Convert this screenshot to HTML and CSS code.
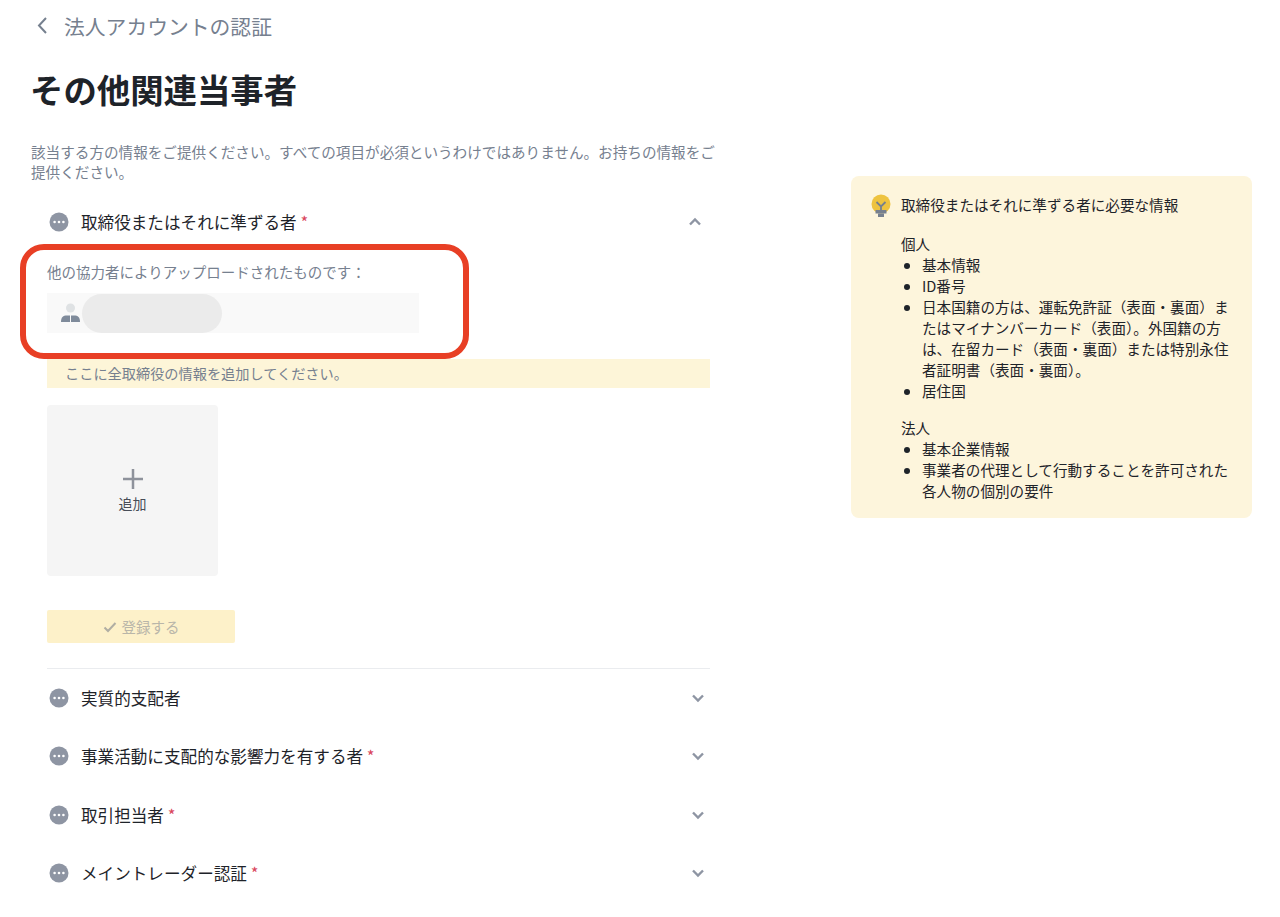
FILE: index.html
```html
<!DOCTYPE html>
<html lang="ja">
<head>
<meta charset="utf-8">
<title>その他関連当事者</title>
<link rel="stylesheet" href="styles.css">
</head>
<body>
<div class="page">
  <main class="main">
    <div class="back">
      <svg class="back-icon" width="14" height="20" viewBox="0 0 14 20"><path d="M12 2 L5 9.500 L12 17" fill="none" stroke="#76808f" stroke-width="2"/></svg>
      <span>法人アカウントの認証</span>
    </div>
    <h1 class="title">その他関連当事者</h1>
    <p class="desc">該当する方の情報をご提供ください。すべての項目が必須というわけではありません。お持ちの情報をご提供ください。</p>
    <section class="open-section">
      <div class="acc-row first">
        <svg class="dots" width="20" height="20" viewBox="0 0 20 20"><circle cx="10" cy="10" r="9.5" fill="#8e95a3"/><circle cx="5.6" cy="10" r="1.3" fill="#fff"/><circle cx="10" cy="10" r="1.3" fill="#fff"/><circle cx="14.4" cy="10" r="1.3" fill="#fff"/></svg>
        <span class="acc-label">取締役またはそれに準ずる者<span class="req"> *</span></span>
        <svg class="chev" width="14" height="10" viewBox="0 0 14 10"><path d="M2 7.5 L7 2.5 L12 7.5" fill="none" stroke="#8e95a3" stroke-width="2.4"/></svg>
      </div>
      <div class="uploaded-label">他の協力者によりアップロードされたものです：</div>
      <div class="uploaded-row">
        <svg class="person" width="22" height="24" viewBox="0 0 22 24"><circle cx="10.5" cy="6" r="4.5" fill="#dfe2e4"/><path d="M1 20 C1 15 3 13.500 7 13.500 L10 13.500 L10 20 Z M11 13.500 L14 13.500 C18 13.500 20 15 20 20 L11 20 Z" fill="#7f8b9b"/></svg>
        <div class="redacted"></div>
      </div>
      <div class="notice">ここに全取締役の情報を追加してください。</div>
      <div class="add-card">
        <svg width="20" height="20" viewBox="0 0 20 20"><path d="M10 0 V20 M0 10 H20" stroke="#8e929b" stroke-width="2.500"/></svg>
        <span class="add-text">追加</span>
      </div>
      <div class="submit">
        <svg width="14" height="12" viewBox="0 0 14 12"><path d="M1.500 6.500 L5 10 L12.500 2" fill="none" stroke="#b0aea3" stroke-width="2"/></svg>
        <span>登録する</span>
      </div>
      <div class="annotation"></div>
    </section>
    <div class="acc-row">
      <svg class="dots" width="20" height="20" viewBox="0 0 20 20"><circle cx="10" cy="10" r="9.5" fill="#8e95a3"/><circle cx="5.6" cy="10" r="1.3" fill="#fff"/><circle cx="10" cy="10" r="1.3" fill="#fff"/><circle cx="14.4" cy="10" r="1.3" fill="#fff"/></svg>
      <span class="acc-label">実質的支配者</span>
      <svg class="chev" width="14" height="10" viewBox="0 0 14 10"><path d="M2 2.500 L7 7.500 L12 2.500" fill="none" stroke="#8e95a3" stroke-width="2.400"/></svg>
    </div>
    <div class="acc-row">
      <svg class="dots" width="20" height="20" viewBox="0 0 20 20"><circle cx="10" cy="10" r="9.500" fill="#8e95a3"/><circle cx="5.6" cy="10" r="1.3" fill="#fff"/><circle cx="10" cy="10" r="1.3" fill="#fff"/><circle cx="14.4" cy="10" r="1.3" fill="#fff"/></svg>
      <span class="acc-label">事業活動に支配的な影響力を有する者<span class="req"> *</span></span>
      <svg class="chev" width="14" height="10" viewBox="0 0 14 10"><path d="M2 2.500 L7 7.500 L12 2.500" fill="none" stroke="#8e95a3" stroke-width="2.400"/></svg>
    </div>
    <div class="acc-row">
      <svg class="dots" width="20" height="20" viewBox="0 0 20 20"><circle cx="10" cy="10" r="9.500" fill="#8e95a3"/><circle cx="5.6" cy="10" r="1.3" fill="#fff"/><circle cx="10" cy="10" r="1.3" fill="#fff"/><circle cx="14.4" cy="10" r="1.3" fill="#fff"/></svg>
      <span class="acc-label">取引担当者<span class="req"> *</span></span>
      <svg class="chev" width="14" height="10" viewBox="0 0 14 10"><path d="M2 2.500 L7 7.500 L12 2.500" fill="none" stroke="#8e95a3" stroke-width="2.400"/></svg>
    </div>
    <div class="acc-row">
      <svg class="dots" width="20" height="20" viewBox="0 0 20 20"><circle cx="10" cy="10" r="9.500" fill="#8e95a3"/><circle cx="5.6" cy="10" r="1.3" fill="#fff"/><circle cx="10" cy="10" r="1.3" fill="#fff"/><circle cx="14.4" cy="10" r="1.3" fill="#fff"/></svg>
      <span class="acc-label">メイントレーダー認証<span class="req"> *</span></span>
      <svg class="chev" width="14" height="10" viewBox="0 0 14 10"><path d="M2 2.500 L7 7.500 L12 2.500" fill="none" stroke="#8e95a3" stroke-width="2.400"/></svg>
    </div>
  </main>
  <aside class="tip">
    <svg class="bulb" width="20" height="26" viewBox="0 0 20 26"><circle cx="10" cy="10" r="9.500" fill="#eec33f"/><path d="M5.500 8 L10 12.500 L14.500 8 M10 12.500 V17" fill="none" stroke="#76808f" stroke-width="1.800"/><rect x="4.500" y="16" width="11" height="3.500" fill="#76808f"/><rect x="7" y="19.500" width="6" height="3.500" fill="#76808f"/></svg>
    <div class="tip-body">
      <div class="tip-head">取締役またはそれに準ずる者に必要な情報</div>
      <div class="tip-sub">個人</div>
      <ul class="tip-list">
        <li>基本情報</li>
        <li>ID番号</li>
        <li>日本国籍の方は、運転免許証（表面・裏面）またはマイナンバーカード（表面）。外国籍の方は、在留カード（表面・裏面）または特別永住者証明書（表面・裏面）。</li>
        <li>居住国</li>
      </ul>
      <div class="tip-sub second">法人</div>
      <ul class="tip-list">
        <li>基本企業情報</li>
        <li>事業者の代理として行動することを許可された各人物の個別の要件</li>
      </ul>
    </div>
  </aside>
</div>
</body>
</html>
```
FILE: styles.css
```css
* { box-sizing: border-box; }
html, body { margin: 0; padding: 0; background: #fff; }
body {
  font-family: "Noto Sans CJK JP", "Noto Sans", sans-serif;
  color: #1e2329;
  height: 917px;
  overflow: hidden;
}
.page {
  display: flex;
  align-items: flex-start;
  padding-left: 30px;
}
.main { width: 681px; flex: none; }
.back {
  display: flex;
  align-items: center;
  height: 28px;
  margin-top: 12px;
  margin-left: 4px;
  gap: 16px;
  font-size: 20.8px;
  line-height: 28px;
  color: #76808f;
}
.title {
  margin: 25px 0 0;
  font-size: 33.4px;
  line-height: 48px;
  font-weight: 700;
  color: #1e2329;
}
.desc {
  margin: 29px 0 0 1px;
  width: 690px;
  font-size: 14.6px;
  line-height: 20px;
  color: #76808f;
}
.open-section { position: relative; margin-left: 17px; width: 663px; border-bottom: 1px solid #eaecef; padding-bottom: 25px; }
.acc-row {
  display: flex;
  align-items: center;
  height: 58.33px;
  margin-left: 19px;
  width: 656px;
  font-size: 16.6px;
  color: #1e2329;
}
.open-section .acc-row { margin-left: 2px; width: 653px; height: 38px; }
.acc-row.first { margin-top: 21px; }
.dots { flex: none; margin-right: 12px; }
.acc-label { flex: 1; line-height: 24px; }
.req { color: #d9455c; }
.chev { flex: none; }
.uploaded-label { margin-top: 21px; font-size: 14.5px; line-height: 20px; color: #76808f; }
.uploaded-row {
  display: flex;
  align-items: center;
  width: 372px;
  height: 40px;
  margin-top: 11px;
  padding-left: 13px;
  background: #f9f9f9;
}
.person { flex: none; margin-top: 2px; }
.redacted { width: 140px; height: 39px; border-radius: 20px; background: #ebebeb; }
.notice {
  margin-top: 26px;
  height: 29px;
  padding-left: 18px;
  background: #fdf5d8;
  font-size: 14.2px;
  line-height: 29px;
  color: #76808f;
}
.add-card {
  display: flex;
  flex-direction: column;
  align-items: center;
  justify-content: center;
  width: 171px;
  height: 171px;
  margin-top: 17px;
  border-radius: 4px;
  background: #f5f5f5;
  gap: 4px;
}
.add-text { font-size: 14px; line-height: 20px; color: #474d57; }
.submit {
  display: flex;
  align-items: center;
  justify-content: center;
  gap: 5px;
  width: 188px;
  height: 33px;
  margin-top: 34px;
  border-radius: 2px;
  background: #fdf1c9;
  font-size: 14.5px;
  color: #b9b6a9;
}
.annotation {
  position: absolute;
  left: -27px;
  top: 41px;
  width: 449px;
  height: 115px;
  border: 6px solid #e83f25;
  border-radius: 24px;
}
.tip {
  display: flex;
  flex: none;
  width: 401px;
  height: 342px;
  margin-top: 176px;
  margin-left: 140px;
  padding: 18px 20px 0 20px;
  border-radius: 8px;
  background: #fdf5dc;
}
.bulb { flex: none; margin-right: 10px; }
.tip-body { flex: 1; font-size: 14.6px; line-height: 21px; color: #1e2329; }
.tip-sub { margin-top: 18px; }
.tip-sub.second { margin-top: 16px; }
.tip-list { margin: 0; padding-left: 21px; }
```
